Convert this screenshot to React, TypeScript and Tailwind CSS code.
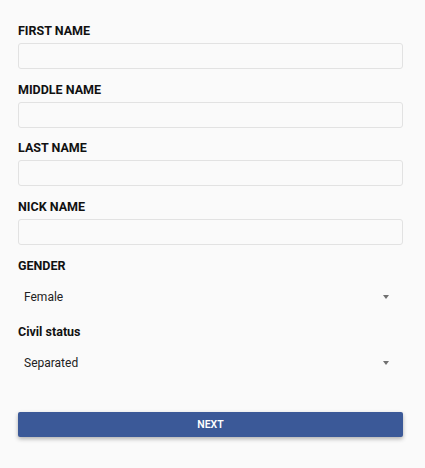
import { useState } from 'react';

const textFields = ['FIRST NAME', 'MIDDLE NAME', 'LAST NAME', 'NICK NAME'];

function Select({ label, value, options, onChange }: { label: string; value: string; options: string[]; onChange: (v: string) => void }) {
  return (
    <div className="mb-2">
      <label className="block text-[12.5px] leading-4 font-bold text-[#111] mb-1">{label}</label>
      <div className="relative h-[38px] flex items-center">
        <select
          value={value}
          onChange={(e) => onChange(e.target.value)}
          className="appearance-none w-full h-full bg-transparent pl-[6px] pr-8 text-[12px] text-[#222] outline-none"
        >
          {options.map((o) => (
            <option key={o}>{o}</option>
          ))}
        </select>
        {/* arrow */}
        <span className="pointer-events-none absolute right-[14px] top-1/2 -translate-y-1/2 w-0 h-0 border-l-[3.5px] border-r-[3.5px] border-t-[4px] border-l-transparent border-r-transparent border-t-[#707070]" />
      </div>
    </div>
  );
}

export default function App() {
  const [gender, setGender] = useState('Female');
  const [civil, setCivil] = useState('Separated');

  return (
    <div className="min-h-[468px] w-full bg-[#fafafa] pl-[18px] pr-[22px] pt-[23px] pb-6 font-['Roboto',sans-serif]">
      {textFields.map((name) => (
        <div key={name} className="mb-[12.7px]">
          <label className="block text-[12.5px] leading-4 font-bold text-[#111] mb-1">{name}</label>
          <input
            type="text"
            className="block w-full h-[26px] rounded-[3px] border border-[#e2e2e2] bg-[#fafafa] px-2 text-[12px] outline-none"
          />
        </div>
      ))}

      <Select label="GENDER" value={gender} options={['Male', 'Female']} onChange={setGender} />
      <Select label="Civil status" value={civil} options={['Single', 'Married', 'Separated', 'Widowed']} onChange={setCivil} />

      <button
        type="button"
        className="mt-[30px] block w-full h-[25px] pt-[2px] rounded-[2px] bg-[#3b5998] text-white text-[10.5px] font-semibold shadow-[0_2px_4px_rgba(0,0,0,0.3)]"
      >
        NEXT
      </button>
    </div>
  );
}
